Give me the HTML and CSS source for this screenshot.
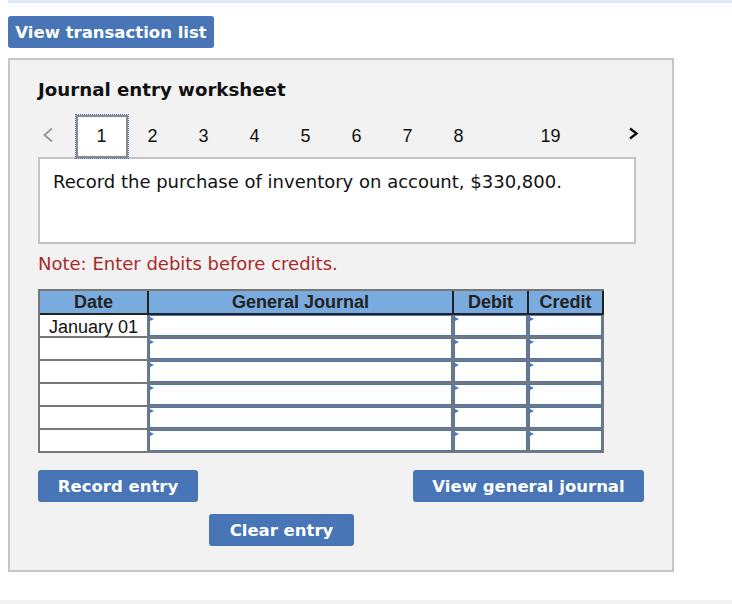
FILE: index.html
```html
<!DOCTYPE html>
<html lang="en">
<head>
<meta charset="utf-8">
<title>Journal entry worksheet</title>
<link rel="stylesheet" href="styles.css">
</head>
<body>
<div class="topbar"></div>
<div class="toolbar">
  <button class="btn btn-list">View transaction list</button>
</div>
<section class="panel">
  <h2 class="title">Journal entry worksheet</h2>
  <nav class="pager">
    <span class="arrow prev"><svg width="12" height="16" viewBox="0 0 12 16"><polyline points="10,1.5 2.5,8 10,14.5" fill="none" stroke="#9a9a9a" stroke-width="2"/></svg></span>
    <ul class="pages">
      <li class="page active"><span class="page-box">1</span></li>
      <li class="page">2</li>
      <li class="page">3</li>
      <li class="page">4</li>
      <li class="page">5</li>
      <li class="page">6</li>
      <li class="page">7</li>
      <li class="page">8</li>
      <li class="page last">19</li>
    </ul>
    <span class="arrow next"><svg width="11" height="13" viewBox="0 0 11 13"><polyline points="2,1.5 8.5,6.5 2,11.5" fill="none" stroke="#111" stroke-width="2.4"/></svg></span>
  </nav>
  <div class="desc">Record the purchase of inventory on account, $330,800.</div>
  <p class="note">Note: Enter debits before credits.</p>
  <div class="jt">
    <div class="row head">
      <div class="th">Date</div>
      <div class="th">General Journal</div>
      <div class="th">Debit</div>
      <div class="th">Credit</div>
    </div>
    <div class="body">
      <div class="row">
        <div class="td date">January 01</div>
        <div class="td"><div class="inp"></div></div>
        <div class="td"><div class="inp"></div></div>
        <div class="td"><div class="inp"></div></div>
      </div>
      <div class="row">
        <div class="td date"></div>
        <div class="td"><div class="inp"></div></div>
        <div class="td"><div class="inp"></div></div>
        <div class="td"><div class="inp"></div></div>
      </div>
      <div class="row">
        <div class="td date"></div>
        <div class="td"><div class="inp"></div></div>
        <div class="td"><div class="inp"></div></div>
        <div class="td"><div class="inp"></div></div>
      </div>
      <div class="row">
        <div class="td date"></div>
        <div class="td"><div class="inp"></div></div>
        <div class="td"><div class="inp"></div></div>
        <div class="td"><div class="inp"></div></div>
      </div>
      <div class="row">
        <div class="td date"></div>
        <div class="td"><div class="inp"></div></div>
        <div class="td"><div class="inp"></div></div>
        <div class="td"><div class="inp"></div></div>
      </div>
      <div class="row">
        <div class="td date"></div>
        <div class="td"><div class="inp"></div></div>
        <div class="td"><div class="inp"></div></div>
        <div class="td"><div class="inp"></div></div>
      </div>
    </div>
  </div>
  <div class="actions">
    <button class="btn btn-record">Record entry</button>
    <button class="btn btn-view">View general journal</button>
  </div>
  <div class="actions2">
    <button class="btn btn-clear">Clear entry</button>
  </div>
</section>
<div class="bottombar"></div>
</body>
</html>
```
FILE: styles.css
```css
* { box-sizing: border-box; }
html, body { margin: 0; padding: 0; }
body {
  width: 732px;
  height: 604px;
  background: #fff;
  font-family: "DejaVu Sans", Verdana, sans-serif;
  color: #111;
  position: relative;
  overflow: hidden;
}
.topbar {
  height: 3px;
  margin-left: 8px;
  background: #deebf7;
}
.toolbar {
  padding: 13px 0 0 8px;
}
.btn {
  display: inline-flex;
  align-items: center;
  justify-content: center;
  border: 0;
  border-radius: 3px;
  background: #4775b5;
  color: #fff;
  font-family: "DejaVu Sans", Verdana, sans-serif;
  font-weight: bold;
  font-size: 16.5px;
  padding: 0 0 0 0;
  margin: 0;
  cursor: pointer;
}
.btn-list { width: 206px; height: 32px; }
.panel {
  margin: 10px 0 0 8px;
  width: 666px;
  height: 514px;
  border: 2px solid #c6c6c6;
  background: #f2f2f2;
  padding: 19px 0 0 28px;
}
.title {
  margin: 0;
  font-size: 18.2px;
  line-height: 22px;
  font-weight: bold;
  color: #111;
}
.pager {
  display: flex;
  align-items: center;
  height: 44px;
  margin-top: 12px;
  position: relative;
  z-index: 1;
}
.arrow { display: flex; align-items: center; }
.prev { width: 38px; padding-left: 4px; }
.next { margin-left: 52px; margin-top: -3px; }
.pages {
  display: flex;
  align-items: center;
  list-style: none;
  margin: 0;
  padding: 0;
  font-family: "Liberation Sans", Arial, sans-serif;
  font-size: 18px;
  color: #111;
}
.page {
  width: 51px;
  display: flex;
  justify-content: center;
  align-items: center;
  height: 44px;
  padding-top: 2px;
}
.page.last { margin-left: 41px; }
.page-box {
  width: 52px;
  height: 43px;
  flex: none;
  display: flex;
  align-items: center;
  justify-content: center;
  background: #fff;
  border: 2px solid #8a8a8a;
  outline: 1px dotted #3d6fc0;
}
.desc {
  width: 598px;
  height: 87px;
  background: #fff;
  border: 2px solid #c4c4c4;
  padding: 12px 13px;
  font-size: 18px;
  line-height: 22px;
  color: #111;
}
.note {
  margin: 9px 0 0;
  font-size: 18px;
  line-height: 22px;
  color: #a82a2a;
}
.jt {
  margin-top: 14px;
  width: 566px;
  border: 2px solid #777;
  border-right: 0;
  font-family: "Liberation Sans", Arial, sans-serif;
  font-size: 18px;
  color: #111;
}
.row {
  display: grid;
  grid-template-columns: 107px 303px 73px 73px;
  column-gap: 2px;
  padding-right: 2px;
  background: #777;
}
.row.head {
  background: #222;
  padding-bottom: 2px;
}
.th {
  height: 22px;
  background: #7aabde;
  font-weight: bold;
  color: #222;
  text-align: center;
  line-height: 23px;
}
.body {
  display: grid;
  row-gap: 2px;
  background: #777;
}
.td {
  height: 21px;
  background: #fff;
}
.td.date {
  text-align: center;
  line-height: 24px;
}
.inp {
  position: relative;
  height: 21px;
  border: 1px solid #4a77b5;
  background: #fff;
}
.inp::before {
  content: "";
  position: absolute;
  left: 0;
  top: 1px;
  border-left: 4px solid #4a77c4;
  border-top: 2.5px solid transparent;
  border-bottom: 2.5px solid transparent;
}
.actions {
  display: flex;
  justify-content: space-between;
  width: 606px;
  margin-top: 17px;
}
.btn-record { width: 160px; height: 32px; }
.btn-view { width: 231px; height: 32px; }
.actions2 {
  margin-top: 12px;
  padding-left: 171px;
}
.btn-clear { width: 145px; height: 32px; }
.bottombar {
  position: absolute;
  left: 0;
  right: 0;
  bottom: 0;
  height: 4px;
  background: #f2f2f2;
}
```
